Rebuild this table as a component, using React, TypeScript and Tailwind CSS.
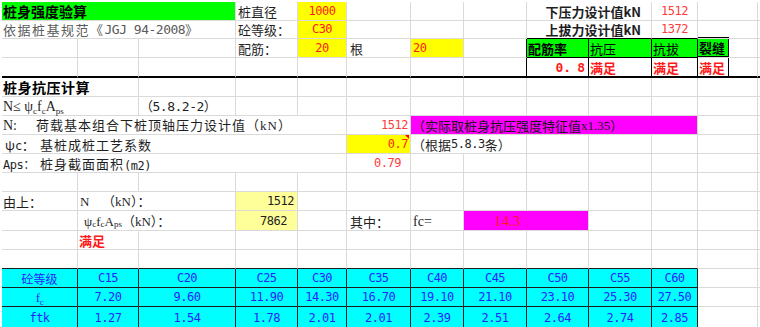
import React from "react";

const CJK = "font-['Noto_Sans_CJK_SC',sans-serif]";
const SERIF = "font-['Liberation_Serif','Noto_Sans_CJK_SC',serif]";
const MONO = "font-['DejaVu_Sans_Mono','Noto_Sans_CJK_SC',monospace] text-[12px] tracking-[-0.5px]";

type CellProps = {
  span?: string;
  cls?: string;
  r?: string;
  b?: string;
  children?: React.ReactNode;
};

function Cell({ span = "", cls = "", r = "border-r-[#dadada]", b = "border-b-[#dadada]", children }: CellProps) {
  return (
    <div
      className={`relative flex items-end whitespace-nowrap border-r border-b leading-[17px] ${r} ${b} ${span} ${cls}`}
    >
      {children}
    </div>
  );
}

function Sub({ children }: { children: React.ReactNode }) {
  return <span className="relative top-[1px] text-[9px] leading-[9px]">{children}</span>;
}

function Blank({ n, b, r }: { n: number; b?: string; r?: string }) {
  return (
    <>
      {Array.from({ length: n }).map((_, i) => (
        <Cell key={i} b={b} r={r} />
      ))}
    </>
  );
}

// right-most block cell is narrower than its column
function Crack({ children, cls, b }: { children?: React.ReactNode; cls: string; b: string }) {
  return (
    <Cell b={b} cls="items-stretch">
      <div className={`flex w-[31px] items-end border-r border-r-black pl-[1px] ${cls}`}>{children}</div>
    </Cell>
  );
}

const grades = ["C15", "C20", "C25", "C30", "C35", "C40", "C45", "C50", "C55", "C60"];
const fc = ["7.20", "9.60", "11.90", "14.30", "16.70", "19.10", "21.10", "23.10", "25.30", "27.50"];
const ftk = ["1.27", "1.54", "1.78", "2.01", "2.01", "2.39", "2.51", "2.64", "2.74", "2.85"];

export default function App() {
  const thick = "border-b-2 border-b-black";
  const dark = "border-b-[#1e1e1e]";
  const darkR = "border-r-[#1e1e1e]";
  const cyan = `bg-[#00ffff] justify-center text-[#2424ff] ${MONO}`;

  return (
    <div className={`h-[327px] w-[760px] overflow-hidden bg-white pl-[2px] pt-[2px] text-[13px] text-[#1f1f1f] ${CJK}`}>
      <div className="grid grid-cols-[76px_61px_97px_62px_49px_64px_53px_63px_62px_63px_46px_60px_3px] grid-rows-[19px_18px_19px_20px_19px_19px_19px_19px_19px_19px_19px_20px_19px_19px_19px_19px_21px]">
        {/* row 0 */}
        <Cell span="col-span-3" cls="bg-[#00ff00] pl-[1px] font-bold text-[14px] text-black">
          桩身强度验算
        </Cell>
        <Cell cls="pl-[2px]">桩直径</Cell>
        <Cell cls={`bg-[#ffff00] justify-center text-[#ff1a1a] ${MONO}`}>1000</Cell>
        <Blank n={3} />
        <Cell span="col-span-2" cls="justify-end pr-[10px] font-bold">
          下压力设计值kN
        </Cell>
        <Cell cls={`justify-center text-[#ff3b3b] ${MONO}`}>1512</Cell>
        <Cell />
        <Cell r="border-r-transparent" />

        {/* row 1 */}
        <Cell span="col-span-3" cls="pl-[1px] tracking-[1.5px] text-[#5a5a5a]">
          依据桩基规范《<span className={`${MONO} text-[13px]`}>JGJ 94-2008</span>》
        </Cell>
        <Cell cls="pl-[2px]">砼等级：</Cell>
        <Cell cls={`bg-[#ffff00] justify-center text-[#ff1a1a] ${MONO}`}>C30</Cell>
        <Blank n={3} />
        <Cell span="col-span-2" cls="justify-end pr-[10px] font-bold" b="border-b-black">
          上拔力设计值kN
        </Cell>
        <Cell cls={`justify-center text-[#ff3b3b] ${MONO}`} b="border-b-black">1372</Cell>
        <Cell cls="items-stretch">
          <div className="w-[31px] border-b border-b-black" />
        </Cell>
        <Cell r="border-r-transparent" />

        {/* row 2 */}
        <Blank n={3} />
        <Cell cls="pl-[2px]">配筋：</Cell>
        <Cell cls={`bg-[#ffff00] justify-center text-[#ff1a1a] ${MONO}`}>20</Cell>
        <Cell cls="pl-[3px]">根</Cell>
        <Cell cls={`bg-[#ffff00] pl-[2px] text-[#ff1a1a] ${MONO}`}>20</Cell>
        <Cell r="border-r-black" />
        <Cell cls="bg-[#00ff00] pl-[1px] font-bold text-black" r="border-r-black" b="border-b-black">配筋率</Cell>
        <Cell cls="bg-[#00ff00] pl-[1px] text-black" r="border-r-black" b="border-b-black">抗压</Cell>
        <Cell cls="bg-[#00ff00] pl-[1px] text-black" r="border-r-black" b="border-b-black">抗拔</Cell>
        <Crack cls="bg-[#00ff00] border-b border-b-black font-bold text-black" b="border-b-[#dadada]">
          裂缝
        </Crack>
        <Cell r="border-r-transparent" />

        {/* row 3 */}
        <Blank n={7} b={thick} />
        <Cell r="border-r-black" b={thick} />
        <Cell
          cls="justify-end pr-[3px] font-['DejaVu_Sans_Mono',monospace] text-[13px] font-bold text-[#ff1a1a]"
          r="border-r-black"
          b={thick}
        >
          <span>0.</span>
          <span className="ml-[6px]">8</span>
        </Cell>
        <Cell cls="pl-[1px] font-bold text-[#ff1a1a]" r="border-r-black" b={thick}>满足</Cell>
        <Cell cls="pl-[1px] font-bold text-[#ff1a1a]" r="border-r-black" b={thick}>满足</Cell>
        <Crack cls="font-bold text-[#ff1a1a]" b={thick}>
          满足
        </Crack>
        <Cell r="border-r-transparent" b={thick} />

        {/* row 4 */}
        <Cell span="col-span-2" cls="pl-[1px] font-bold text-[14px] tracking-[0.5px] text-black">桩身抗压计算</Cell>
        <Blank n={10} />
        <Cell r="border-r-transparent" />

        {/* row 5 */}
        <Cell span="col-span-2" cls={`items-center pl-[1px] text-[14px] ${SERIF}`}>
          N≤ ψ<Sub>c</Sub>f<Sub>c</Sub>A<Sub>ps</Sub>
        </Cell>
        <Cell cls={`pl-[1px] ${MONO} text-[13px]`}>（5.8.2-2）</Cell>
        <Blank n={9} />
        <Cell r="border-r-transparent" />

        {/* row 6 */}
        <Cell span="col-span-5" cls="items-center pl-[1px]">
          <span className={`${SERIF} w-[33px] shrink-0 text-[14px]`}>N:</span>
          <span className="tracking-[1px]">荷载基本组合下桩顶轴压力设计值（<span className={SERIF}>kN</span>）</span>
        </Cell>
        <Cell cls={`justify-end pr-[2px] text-[#ff3b3b] ${MONO}`}>1512</Cell>
        <Cell span="col-span-5" cls="bg-[#ff00ff] pl-[1px] text-[#1a1a1a]">
          （实际取桩身抗压强度特征值<span className={SERIF}>x1.35</span>）
        </Cell>
        <Cell />
        <Cell r="border-r-transparent" />

        {/* row 7 */}
        <Cell span="col-span-5" cls="items-center pl-[3px]">
          <span className="w-[35px] shrink-0">
            ψ<span className={`${MONO} leading-[12px]`}>c</span>：
          </span>
          <span className="tracking-[1px]">基桩成桩工艺系数</span>
        </Cell>
        <Cell cls={`bg-[#ffff00] justify-end pr-[2px] text-[#ff2a00] ${MONO}`}>
          0.7
          <span className="absolute right-[1px] top-0 h-0 w-0 border-l-[4px] border-t-[4px] border-l-transparent border-t-[#ff0000]" />
        </Cell>
        <Cell span="col-span-2" cls="pl-[1px]">
          （根据<span className={MONO}>5.8.3</span>条）
        </Cell>
        <Blank n={4} />
        <Cell r="border-r-transparent" />

        {/* row 8 */}
        <Cell span="col-span-5" cls="items-center pl-[1px]">
          <span className={`${MONO} relative top-[2px] w-[37px] shrink-0`}>Aps：</span>
          <span className="tracking-[1px]">桩身截面面积</span>
          <span className={`${MONO} leading-[12px]`}>(m2)</span>
        </Cell>
        <Cell cls={`justify-end pr-[9px] text-[#ff3b3b] ${MONO}`}>0.79</Cell>
        <Blank n={6} />
        <Cell r="border-r-transparent" />

        {/* row 9 */}
        <Blank n={12} />
        <Cell r="border-r-transparent" />

        {/* row 10 */}
        <Cell cls="pl-[1px]">由上：</Cell>
        <Cell span="col-span-2" cls="pl-[2px]">
          <span className={`${SERIF} w-[22px] shrink-0`}>N</span>
          <span>
            （<span className={SERIF}>kN</span>）：
          </span>
        </Cell>
        <Cell cls={`bg-[#ffff99] justify-end pr-[3px] ${MONO}`}>1512</Cell>
        <Blank n={8} />
        <Cell r="border-r-transparent" />

        {/* row 11 */}
        <Cell />
        <Cell span="col-span-2" cls="items-center pl-[6px]">
          <span className={SERIF}>
            ψ<Sub>c</Sub>f<Sub>c</Sub>A<Sub>ps</Sub>
          </span>
          <span>
            （<span className={SERIF}>kN</span>）：
          </span>
        </Cell>
        <Cell cls={`bg-[#ffff99] justify-end pr-[10px] ${MONO}`}>7862</Cell>
        <Cell />
        <Cell cls="pl-[3px]">其中：</Cell>
        <Cell cls={`pl-[2px] text-[14px] ${SERIF}`}>fc=</Cell>
        <Cell span="col-span-2" cls={`bg-[#ff00ff] pl-[30px] text-[15px] text-[#ff1a1a] ${SERIF}`}>14.3</Cell>
        <Blank n={3} />
        <Cell r="border-r-transparent" />

        {/* row 12 */}
        <Cell />
        <Cell cls="pl-[1px] font-bold text-[#ff1a1a]">满足</Cell>
        <Blank n={10} />
        <Cell r="border-r-transparent" />

        {/* row 13 */}
        <Blank n={11} b={dark} />
        <Cell />
        <Cell r="border-r-transparent" />

        {/* rows 14-16: concrete table */}
        <Cell cls={`${cyan} ${CJK} text-[12px] tracking-normal`} r={darkR} b={dark}>砼等级</Cell>
        {grades.map((g) => (
          <Cell key={g} cls={cyan} r={darkR} b={dark}>{g}</Cell>
        ))}
        <Cell />
        <Cell r="border-r-transparent" />

        <Cell cls={`${cyan} items-center ${SERIF} text-[13px]`} r={darkR} b={dark}>
          f<Sub>c</Sub>
        </Cell>
        {fc.map((v, i) => (
          <Cell key={i} cls={cyan} r={darkR} b={dark}>{v}</Cell>
        ))}
        <Cell />
        <Cell r="border-r-transparent" />

        <Cell cls={cyan} r={darkR} b={dark}>ftk</Cell>
        {ftk.map((v, i) => (
          <Cell key={i} cls={cyan} r={darkR} b={dark}>{v}</Cell>
        ))}
        <Cell />
        <Cell r="border-r-transparent" />
      </div>
    </div>
  );
}
